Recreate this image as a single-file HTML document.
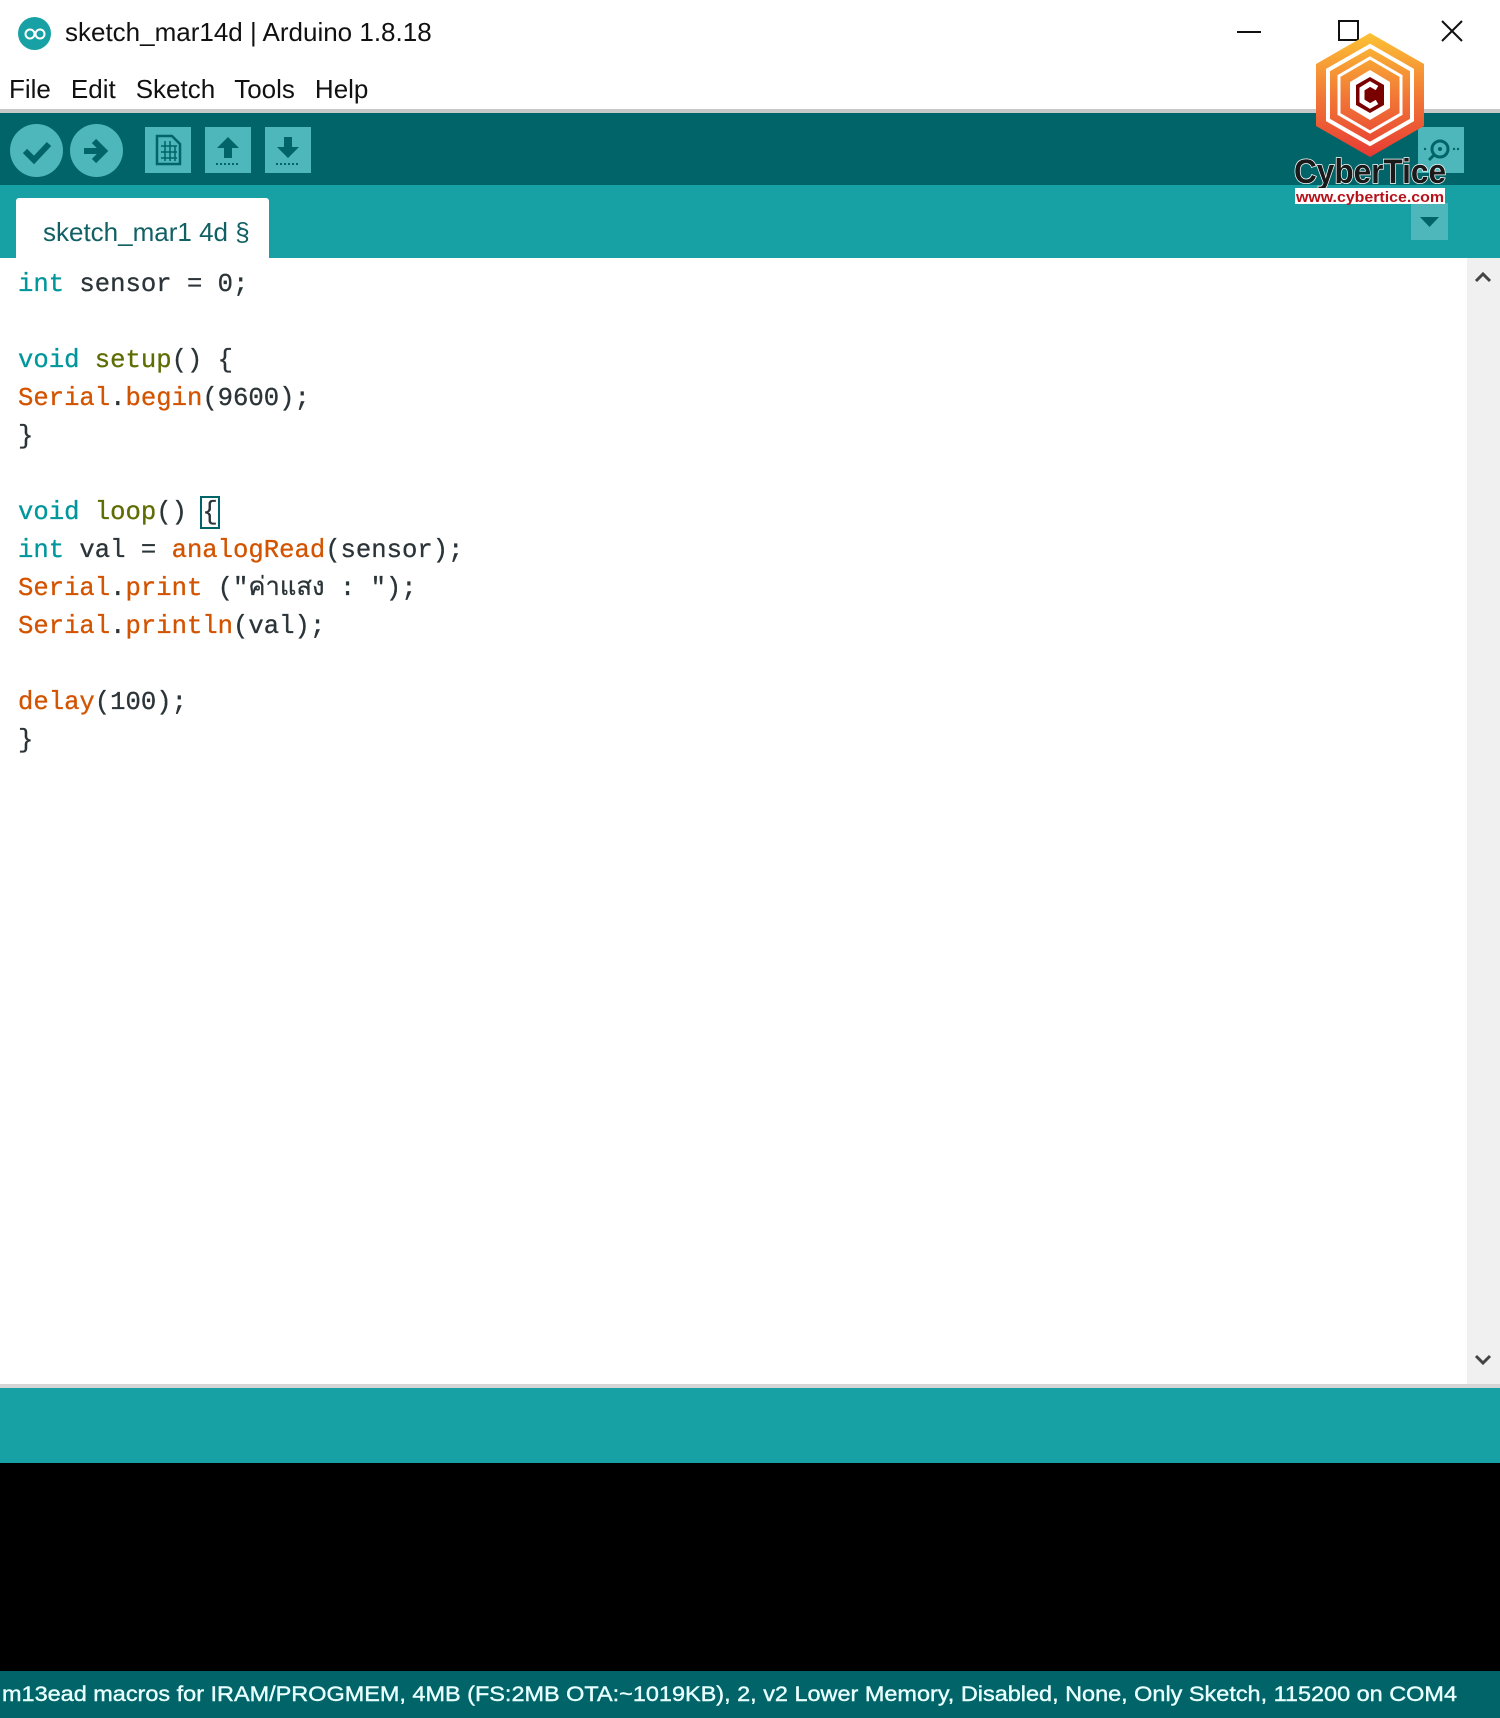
<!DOCTYPE html>
<html><head><meta charset="utf-8"><style>
*{margin:0;padding:0;box-sizing:border-box}
body{width:1500px;height:1718px;position:relative;background:#fff;overflow:hidden;font-family:"Liberation Sans",sans-serif}
.abs{position:absolute}
.code{position:absolute;left:18px;font-family:"Liberation Mono","DejaVu Sans Mono",monospace;font-size:25.6px;color:#2b3438;white-space:pre;line-height:38px;-webkit-text-stroke:0.3px}
.k{color:#00979c}.f{color:#5e6d03}.s{color:#d35400}
.btn{position:absolute;background:#4db7bb}
</style></head><body>
<div class="abs" style="left:18px;top:17px;width:33px;height:33px;border-radius:50%;background:#17a1a5"></div>
<svg class="abs" style="left:22px;top:27px" width="26" height="14"><circle cx="8" cy="7" r="4.5" fill="none" stroke="#fff" stroke-width="2"/><circle cx="18" cy="7" r="4.5" fill="none" stroke="#fff" stroke-width="2"/></svg>
<div class="abs" style="left:65px;top:17px;font-size:26px;color:#111">sketch_mar14d | Arduino 1.8.18</div>
<div class="abs" style="left:1237px;top:31px;width:24px;height:2px;background:#111"></div>
<div class="abs" style="left:1338px;top:20px;width:21px;height:21px;border:2px solid #111"></div>
<svg class="abs" style="left:1440px;top:19px" width="24" height="24"><path d="M2 2L22 22M22 2L2 22" stroke="#111" stroke-width="2"/></svg>
<div class="abs" style="left:9px;top:74px;font-size:26px;color:#111"><span>File</span><span style="margin-left:20px">Edit</span><span style="margin-left:20px">Sketch</span><span style="margin-left:19px">Tools</span><span style="margin-left:20px">Help</span></div>
<div class="abs" style="left:0;top:109px;width:1500px;height:4px;background:#c8c8c8"></div>
<div class="abs" style="left:0;top:113px;width:1500px;height:72px;background:#006468"></div>
<div class="btn" style="left:10px;top:124px;width:53px;height:53px;border-radius:50%"></div>
<div class="btn" style="left:70px;top:124px;width:53px;height:53px;border-radius:50%"></div>
<svg class="abs" style="left:10px;top:124px" width="53" height="53"><path d="M15 27l9 9 15-16" fill="none" stroke="#006468" stroke-width="6"/></svg>
<svg class="abs" style="left:70px;top:124px" width="53" height="53"><path d="M14 27h16M24 17l10 10-10 10" fill="none" stroke="#006468" stroke-width="6"/></svg>
<div class="btn" style="left:145px;top:127px;width:46px;height:46px"></div>
<svg class="abs" style="left:145px;top:127px" width="46" height="46"><path d="M12 9h15l8 8v20H12z" fill="none" stroke="#006468" stroke-width="2.5"/><path d="M16 19h16M16 25h16M16 31h16M20 14v20M25 14v20M30 19v15" stroke="#006468" stroke-width="1.5"/></svg>
<div class="btn" style="left:205px;top:127px;width:46px;height:46px"></div>
<svg class="abs" style="left:205px;top:127px" width="46" height="46"><path d="M23 10l-11 11h7v10h8V21h7z" fill="#006468"/><path d="M11 37h24" stroke="#006468" stroke-width="2" stroke-dasharray="2 2"/></svg>
<div class="btn" style="left:265px;top:127px;width:46px;height:46px"></div>
<svg class="abs" style="left:265px;top:127px" width="46" height="46"><path d="M23 31l-11-11h7V10h8v10h7z" fill="#006468"/><path d="M11 37h24" stroke="#006468" stroke-width="2" stroke-dasharray="2 2"/></svg>
<div class="btn" style="left:1418px;top:127px;width:46px;height:46px"></div>
<svg class="abs" style="left:1418px;top:127px" width="46" height="46"><circle cx="22" cy="22" r="8" fill="none" stroke="#006468" stroke-width="3"/><circle cx="22" cy="22" r="2" fill="#006468"/><path d="M16 28l-5 5" stroke="#006468" stroke-width="3"/><circle cx="36" cy="22" r="1.2" fill="#006468"/><circle cx="40" cy="22" r="1.2" fill="#006468"/><circle cx="7" cy="22" r="1.2" fill="#006468"/></svg>
<div class="abs" style="left:0;top:185px;width:1500px;height:73px;background:#17a1a5"></div>
<div class="abs" style="left:16px;top:198px;width:253px;height:60px;background:#fff;border-radius:3px 3px 0 0"></div>
<div class="abs" style="left:43px;top:217px;font-size:26px;color:#116064">sketch_mar1 4d §</div>
<div class="btn" style="left:1411px;top:203px;width:37px;height:37px"></div>
<svg class="abs" style="left:1411px;top:203px" width="37" height="37"><path d="M9 14h19l-9.5 10z" fill="#006468"/></svg>
<div class="abs" style="left:1467px;top:258px;width:33px;height:1127px;background:#f0f0f0"></div>
<svg class="abs" style="left:1472px;top:270px" width="22" height="14"><path d="M4 11l7-7 7 7" fill="none" stroke="#444" stroke-width="3"/></svg>
<svg class="abs" style="left:1472px;top:1353px" width="22" height="14"><path d="M4 3l7 7 7-7" fill="none" stroke="#444" stroke-width="3"/></svg>
<div class="code" style="top:266px"><span class="k">int</span> sensor = 0;

<span class="k">void</span> <span class="f">setup</span>() {
<span class="s">Serial</span>.<span class="s">begin</span>(9600);
}

<span class="k">void</span> <span class="f">loop</span>() <span style="outline:2px solid #006468">{</span>
<span class="k">int</span> val = <span class="s">analogRead</span>(sensor);
<span class="s">Serial</span>.<span class="s">print</span> ("ค่าแสง : ");
<span class="s">Serial</span>.<span class="s">println</span>(val);

<span class="s">delay</span>(100);
}</div>
<div class="abs" style="left:0;top:1384px;width:1500px;height:4px;background:#d6d6d6"></div>
<div class="abs" style="left:0;top:1388px;width:1500px;height:75px;background:#17a1a5"></div>
<div class="abs" style="left:0;top:1463px;width:1500px;height:209px;background:#000"></div>
<div class="abs" style="left:0;top:1671px;width:1500px;height:47px;background:#006468"></div>
<svg class="abs" style="left:0;top:1671px" width="1500" height="47"><text x="2" y="30" font-family="Liberation Sans" font-size="21" fill="#e8ffff" stroke="#e8ffff" stroke-width="0.4" textLength="1455" lengthAdjust="spacingAndGlyphs">m13ead macros for IRAM/PROGMEM, 4MB (FS:2MB OTA:~1019KB), 2, v2 Lower Memory, Disabled, None, Only Sketch, 115200 on COM4</text></svg>
<svg class="abs" style="left:1285px;top:30px" width="180" height="180">
<defs><linearGradient id="g" x1="0" y1="0" x2="0" y2="1"><stop offset="0" stop-color="#fcc234"/><stop offset="0.5" stop-color="#f27a36"/><stop offset="1" stop-color="#e63a33"/></linearGradient></defs>
<path d="M85 3L139 34V96L85 127L31 96V34z" fill="url(#g)"/>
<path d="M85 16L127 40V90L85 114L43 90V40z" fill="none" stroke="#fff" stroke-width="4"/>
<path d="M85 28L116 46V84L85 102L54 84V46z" fill="none" stroke="#fff" stroke-width="3"/>
<path d="M85 40L105 52V78L85 90L65 78V52z" fill="#fff"/>
<path d="M85 47L99 55V75L85 83L71 75V55z" fill="#7a0000"/>
<path d="M92 58L85 54L77 59V71L85 76L92 72" fill="none" stroke="#fff" stroke-width="5"/>
<text x="85" y="153" text-anchor="middle" font-family="Liberation Sans" font-weight="bold" font-size="34" fill="#1a1a1a" stroke="#fff" stroke-width="1.5" paint-order="stroke" textLength="152" lengthAdjust="spacingAndGlyphs">CyberTice</text>
<rect x="10" y="158" width="150" height="16" fill="#fff"/>
<text x="85" y="172" text-anchor="middle" font-family="Liberation Sans" font-weight="bold" font-size="15" fill="#b5121b" textLength="148" lengthAdjust="spacingAndGlyphs">www.cybertice.com</text>
</svg>
</body></html>
